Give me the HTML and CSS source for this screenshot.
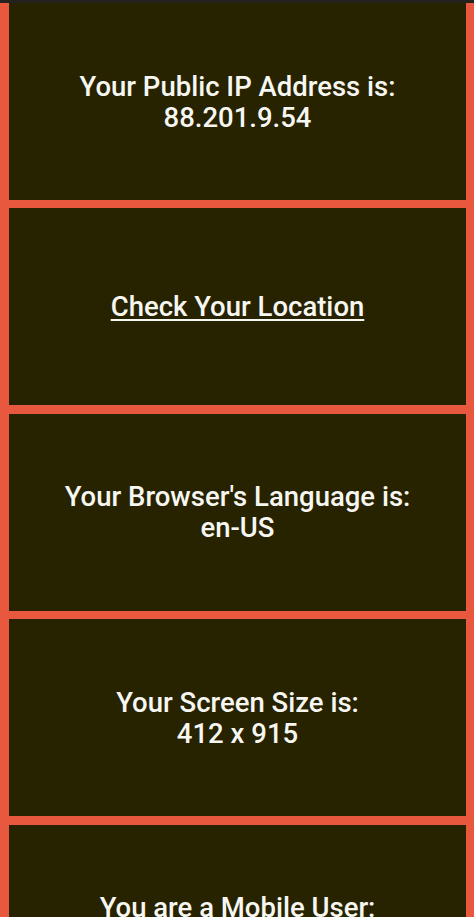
FILE: index.html
```html
<!DOCTYPE html>
<html lang="en">
<head>
<meta charset="utf-8">
<title>Your Info</title>
<link rel="stylesheet" href="styles.css">
</head>
<body>
<div class="topbar"></div>
<main class="stack">
  <section class="card"><p class="info">Your Public IP Address is:<br>88.201.9.54</p></section>
  <section class="card"><a class="info link" href="#">Check Your Location</a></section>
  <section class="card"><p class="info">Your Browser's Language is:<br>en-US</p></section>
  <section class="card"><p class="info">Your Screen Size is:<br>412 x 915</p></section>
  <section class="card"><p class="info">You are a Mobile User:<br>Yes</p></section>
</main>
</body>
</html>
```
FILE: styles.css
```css
html, body {
  margin: 0;
  padding: 0;
}
body {
  background: #e8583f;
  font-family: Roboto, "Noto Sans", sans-serif;
  overflow: hidden;
}
.topbar {
  height: 3px;
  background: #23221f;
}
.stack {
  display: flex;
  flex-direction: column;
  gap: 8.4px;
  padding: 0 8px 0 9px;
}
.card {
  height: 197px;
  background: #272200;
  display: flex;
  align-items: center;
  justify-content: center;
}
.info {
  margin: 0;
  color: #f7f7f2;
  font-size: 27.5px;
  font-weight: 500;
  line-height: 31px;
  text-align: center;
}
.link {
  text-decoration: underline;
  text-underline-offset: 3px;
  text-decoration-thickness: 2px;
}
```
